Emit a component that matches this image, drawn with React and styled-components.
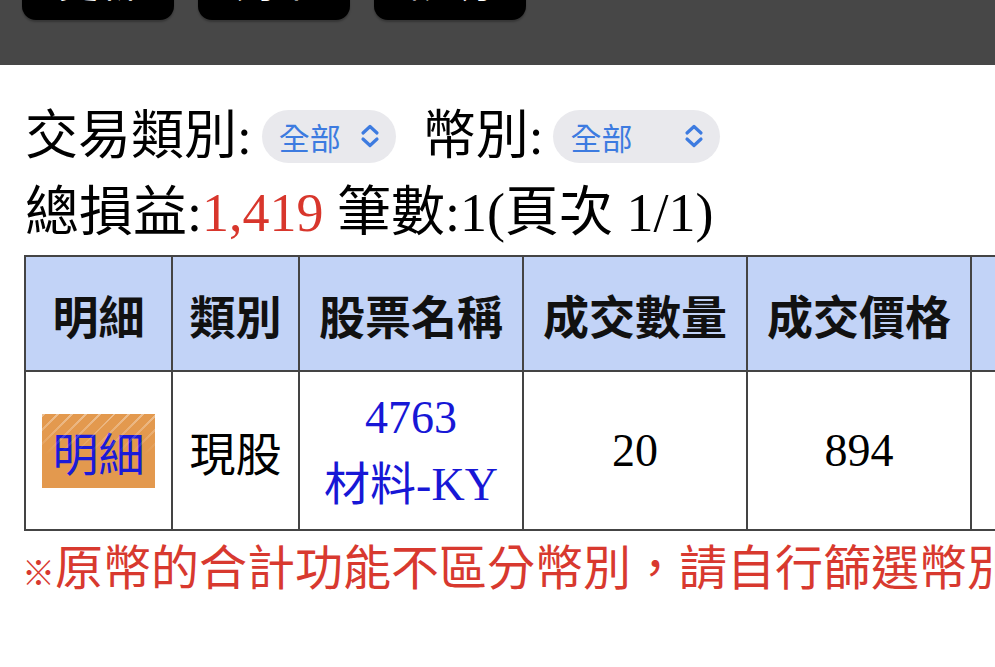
import styled, { createGlobalStyle } from "styled-components";

const GlobalStyle = createGlobalStyle`
  html, body {
    margin: 0;
    padding: 0;
    background: #fff;
    overflow: hidden;
  }
  body {
    font-family: "Liberation Serif", "Noto Sans CJK TC", serif;
    color: #000;
  }
`;

const serif = `"Liberation Serif", "Noto Sans CJK TC", serif`;
const sans = `"Noto Sans CJK TC", "Noto Sans", sans-serif`;

const columns = [
  { key: "detail", title: "明細", width: 147 },
  { key: "type", title: "類別", width: 127 },
  { key: "name", title: "股票名稱", width: 224 },
  { key: "qty", title: "成交數量", width: 224 },
  { key: "price", title: "成交價格", width: 224 },
  { key: "side", title: "買賣別", width: 200 },
];

const ChevronUpDown = () => (
  <svg width="24" height="26" viewBox="0 0 24 26" fill="none">
    <path
      d="M5 10l7-6.5 7 6.5M5 16l7 6.5 7-6.5"
      stroke="#3d7be0"
      strokeWidth="3.2"
      strokeLinecap="round"
      strokeLinejoin="round"
    />
  </svg>
);

const App = () => {
  return (
    <Page>
      <GlobalStyle />
      <TopBar>
        <NavButton>更新</NavButton>
        <NavButton>列印</NavButton>
        <NavButton>說明</NavButton>
      </TopBar>

      <Main>
        <FilterRow>
          <Label>交易類別:</Label>
          <Select $width={134} $gapRight={21}>
            <span>全部</span>
            <ChevronUpDown />
          </Select>
          <Label $gap={6}>幣別:</Label>
          <Select $width={167}>
            <span>全部</span>
            <ChevronUpDown />
          </Select>
        </FilterRow>

        <Summary>
          總損益:<Profit>1,419</Profit> 筆數:1(頁次 1/1)
        </Summary>

        <Table>
          <colgroup>
            {columns.map((c) => (
              <col key={c.key} style={{ width: c.width }} />
            ))}
          </colgroup>
          <thead>
            <tr>
              {columns.map((c) => (
                <HeadCell key={c.key}>{c.title}</HeadCell>
              ))}
            </tr>
          </thead>
          <tbody>
            <tr>
              <Cell>
                <DetailButton>明細</DetailButton>
              </Cell>
              <Cell $sans>現股</Cell>
              <Cell>
                <StockLink>
                  4763
                  <br />
                  材料-KY
                </StockLink>
              </Cell>
              <Cell>20</Cell>
              <Cell>894</Cell>
              <Cell></Cell>
            </tr>
          </tbody>
        </Table>

        <Note>
          <Mark>※</Mark>原幣的合計功能不區分幣別，請自行篩選幣別
        </Note>
      </Main>
    </Page>
  );
};

const Page = styled.div`
  width: 1200px;
  min-height: 667px;
`;

const TopBar = styled.div`
  height: 65px;
  background: #474747;
  display: flex;
  align-items: flex-start;
  gap: 24px;
  padding-left: 22px;
  overflow: hidden;
`;

const NavButton = styled.div`
  width: 152px;
  height: 62px;
  margin-top: -42px;
  background: #000;
  border-radius: 14px;
  box-shadow: 0 2px 2px rgba(0, 0, 0, 0.25);
  color: #fff;
  font-family: ${sans};
  font-size: 40px;
  line-height: 45px;
  text-align: center;
`;

const Main = styled.div`
  padding-left: 24px;
`;

const FilterRow = styled.div`
  display: flex;
  align-items: center;
  height: 78px;
  margin-top: 32px;
`;

const Label = styled.span`
  font-family: ${serif};
  font-size: 53px;
  line-height: 78px;
  margin-left: ${(p) => p.$gap || 1}px;
  margin-right: 10px;
  white-space: nowrap;
`;

const Select = styled.button`
  width: ${(p) => p.$width}px;
  height: 53px;
  margin-right: ${(p) => p.$gapRight || 0}px;
  padding: 0 14px 0 17px;
  border: none;
  border-radius: 27px;
  background: #e9e9ed;
  display: flex;
  align-items: center;
  justify-content: space-between;
  font-family: ${sans};
  font-size: 31px;
  color: #3d7be0;
  flex-shrink: 0;
`;

const Summary = styled.div`
  height: 77px;
  line-height: 77px;
  font-family: ${serif};
  font-size: 54px;
  padding-left: 1px;
  white-space: nowrap;
`;

const Profit = styled.span`
  color: #d8362c;
`;

const Table = styled.table`
  margin-top: 3px;
  border-collapse: collapse;
  table-layout: fixed;
  border: 2px solid #3a3a3a;
`;

const HeadCell = styled.th`
  height: 113px;
  padding: 0;
  background: #c2d3f7;
  border: 2px solid #444;
  font-family: ${sans};
  font-weight: 700;
  font-size: 46px;
  color: #111;
  text-align: center;
  white-space: nowrap;
  overflow: hidden;
`;

const Cell = styled.td`
  height: 157px;
  padding: 0;
  border: 2px solid #444;
  font-family: ${(p) => (p.$sans ? sans : serif)};
  font-size: 46px;
  text-align: center;
  vertical-align: middle;
`;

const DetailButton = styled.div`
  position: relative;
  width: 113px;
  height: 74px;
  margin: 0 auto;
  background: #e3994e;
  color: #1a1ad8;
  font-family: ${sans};
  font-size: 46px;
  line-height: 74px;
  overflow: hidden;

  &::before {
    content: "";
    position: absolute;
    inset: 0;
    background: repeating-linear-gradient(
      -45deg,
      rgba(255, 255, 255, 0.38) 0 2px,
      transparent 2px 10px
    );
    -webkit-mask-image: linear-gradient(to bottom, #000 0%, transparent 55%);
    mask-image: linear-gradient(to bottom, #000 0%, transparent 55%);
  }
`;

const StockLink = styled.div`
  color: #1717d6;
  line-height: 67px;
  white-space: nowrap;
`;

const Note = styled.div`
  margin-left: -2px;
  height: 66px;
  line-height: 66px;
  font-family: ${sans};
  font-size: 48px;
  color: #d8392f;
  white-space: nowrap;
`;

const Mark = styled.span`
  font-size: 33px;
`;

export default App;
